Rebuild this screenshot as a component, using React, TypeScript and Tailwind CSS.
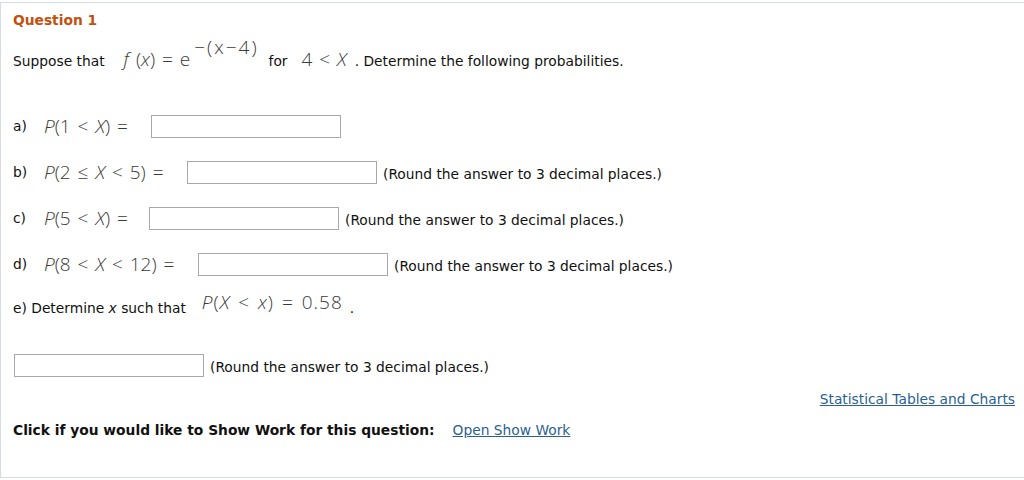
import React from "react";

const M = ({ children, className = "" }: { children: React.ReactNode; className?: string }) => (
  <span
    className={"text-[19px] font-light text-[#3a3a3a] whitespace-pre [word-spacing:2px] " + className}
    style={{ fontFamily: '"Open Sans", "Noto Sans", sans-serif' }}
  >
    {children}
  </span>
);

const Box = ({ className = "" }: { className?: string }) => (
  <div className={"h-[23px] w-[190px] shrink-0 border border-[#a8a8a8] bg-white " + className} />
);

const Round = () => <span className="ml-[6px] mt-[5px]">(Round the answer to 3 decimal places.)</span>;

export default function App() {
  return (
    <div
      className="w-[1024px] h-[480px] bg-white pt-[2px] text-[13.8px] text-[#111]"
      style={{ fontFamily: '"DejaVu Sans", Verdana, sans-serif' }}
    >
      <div className="h-[476px] border-t border-l border-b border-[#d5dce5] pl-[12px] pr-[9px]">
        <div className="mt-[7px] h-[20px] flex items-center font-bold text-[13.8px] text-[#c4500e]">Question 1</div>

        <div className="mt-[15px] h-[30px] flex items-end pb-[2px]">
          <span className="mb-[1px]">Suppose that</span>
          <M className="ml-[19px] [word-spacing:0px]"><span className="italic">f</span> (<span className="italic">x</span>) = e</M>
          <M className="relative -top-[12px] ml-[4px] tracking-[2px]">−(x−4)</M>
          <span className="ml-[10px] mb-[1px]">for</span>
          <M className="ml-[14px]">4 &lt; <span className="italic">X</span></M>
          <span className="ml-[8px] mb-[1px]">. Determine the following probabilities.</span>
        </div>

        <div className="mt-[39px] h-[24px] flex items-center">
          <span className="w-[31px] shrink-0">a)</span>
          <M className="w-[107px] shrink-0"><span className="italic">P</span>(1 &lt; <span className="italic">X</span>) =</M>
          <Box />
        </div>

        <div className="mt-[22px] h-[24px] flex items-center">
          <span className="w-[31px] shrink-0">b)</span>
          <M className="w-[143px] shrink-0"><span className="italic">P</span>(2 ≤ <span className="italic">X</span> &lt; 5) =</M>
          <Box />
          <Round />
        </div>

        <div className="mt-[22px] h-[24px] flex items-center">
          <span className="w-[31px] shrink-0">c)</span>
          <M className="w-[105px] shrink-0"><span className="italic">P</span>(5 &lt; <span className="italic">X</span>) =</M>
          <Box />
          <Round />
        </div>

        <div className="mt-[22px] h-[24px] flex items-center">
          <span className="w-[31px] shrink-0">d)</span>
          <M className="w-[154px] shrink-0"><span className="italic">P</span>(8 &lt; <span className="italic">X</span> &lt; 12) =</M>
          <Box />
          <Round />
        </div>

        <div className="mt-[21px] h-[24px] flex items-end pb-[2px]">
          <span>e) Determine <span className="italic">x</span> such that</span>
          <M className="ml-[16px] relative -top-[3px] tracking-[1px]"><span className="italic">P</span>(<span className="italic">X</span> &lt; <span className="italic">x</span>) = 0.58</M>
          <span className="ml-[7px]">.</span>
        </div>

        <div className="mt-[32px] h-[24px] flex items-center pl-[1px]">
          <Box />
          <Round />
        </div>

        <div className="mt-[12px] h-[20px] flex items-center justify-end">
          <a className="text-[#2a5f94] underline">Statistical Tables and Charts</a>
        </div>

        <div className="mt-[11px] h-[20px] flex items-center">
          <span className="font-bold">Click if you would like to Show Work for this question:</span>
          <a className="ml-[18px] text-[#2a5f94] underline">Open Show Work</a>
        </div>
      </div>
    </div>
  );
}
